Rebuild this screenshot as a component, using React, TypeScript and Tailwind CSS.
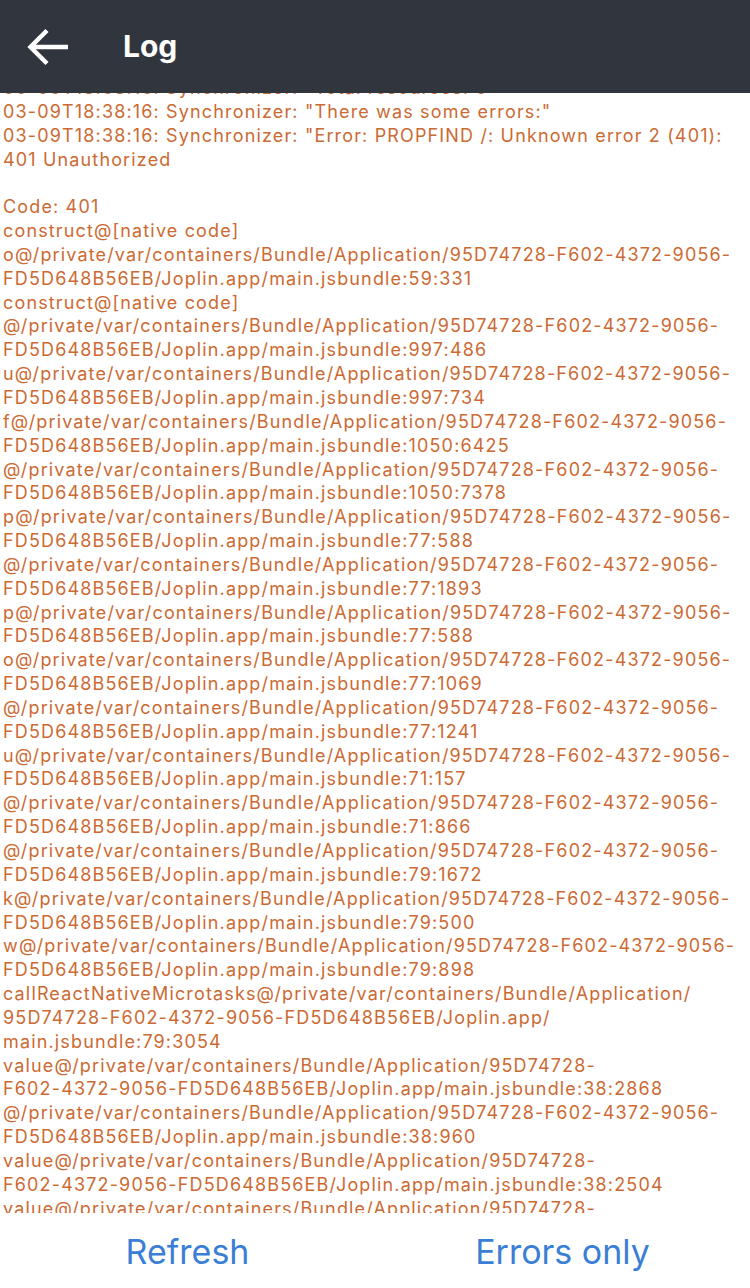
import React from 'react';

const path = '/private/var/containers/Bundle/Application/95D74728-F602-4372-9056-';
const tail = 'FD5D648B56EB/Joplin.app/main.jsbundle:';

const lines: string[] = [
  '03-09T18:38:16: Synchronizer: "Total resources: 0"',
  '03-09T18:38:16: Synchronizer: "There was some errors:"',
  '03-09T18:38:16: Synchronizer: "Error: PROPFIND /: Unknown error 2 (401):',
  '401 Unauthorized',
  '',
  'Code: 401',
  'construct@[native code]',
  'o@' + path,
  tail + '59:331',
  'construct@[native code]',
  '@' + path,
  tail + '997:486',
  'u@' + path,
  tail + '997:734',
  'f@' + path,
  tail + '1050:6425',
  '@' + path,
  tail + '1050:7378',
  'p@' + path,
  tail + '77:588',
  '@' + path,
  tail + '77:1893',
  'p@' + path,
  tail + '77:588',
  'o@' + path,
  tail + '77:1069',
  '@' + path,
  tail + '77:1241',
  'u@' + path,
  tail + '71:157',
  '@' + path,
  tail + '71:866',
  '@' + path,
  tail + '79:1672',
  'k@' + path,
  tail + '79:500',
  'w@' + path,
  tail + '79:898',
  'callReactNativeMicrotasks@/private/var/containers/Bundle/Application/',
  '95D74728-F602-4372-9056-FD5D648B56EB/Joplin.app/',
  'main.jsbundle:79:3054',
  'value@/private/var/containers/Bundle/Application/95D74728-',
  'F602-4372-9056-FD5D648B56EB/Joplin.app/main.jsbundle:38:2868',
  '@' + path,
  tail + '38:960',
  'value@/private/var/containers/Bundle/Application/95D74728-',
  'F602-4372-9056-FD5D648B56EB/Joplin.app/main.jsbundle:38:2504',
  'value@/private/var/containers/Bundle/Application/95D74728-',
];

const BackArrow = () => (
  <svg width="42" height="38" viewBox="0 0 42 38" fill="none" stroke="white" strokeWidth="4.5">
    <path d="M3 19H41" />
    <path d="M20 2.5L3.5 19L20 35.5" />
  </svg>
);

export default function App() {
  return (
    <div className="flex flex-col h-[1288px] w-[750px] bg-white overflow-hidden font-['Inter',sans-serif]">
      {/* header */}
      <div className="flex items-center h-[93px] shrink-0 bg-[#31363e] z-10">
        <div className="ml-[27px] mt-[1px]">
          <BackArrow />
        </div>
        <span className="ml-[54px] text-[30px] font-bold text-white">Log</span>
      </div>

      {/* log output */}
      <div className="flex-1 overflow-hidden">
        <div className="-mt-[17px] pl-[3px] text-[18px] leading-[23.85px] tracking-[1.15px] text-[#cc6a33]">
          {lines.map((l, i) => (
            <div key={i} className="whitespace-nowrap h-[23.85px]">
              {l}
            </div>
          ))}
        </div>
      </div>

      {/* bottom actions */}
      <div className="flex h-[75px] shrink-0 bg-white">
        <button className="flex-1 flex items-center justify-center text-[34px] text-[#3a7fd5] pt-[1px]">
          Refresh
        </button>
        <button className="flex-1 flex items-center justify-center text-[34px] text-[#3a7fd5] pt-[1px]">
          Errors only
        </button>
      </div>
    </div>
  );
}
